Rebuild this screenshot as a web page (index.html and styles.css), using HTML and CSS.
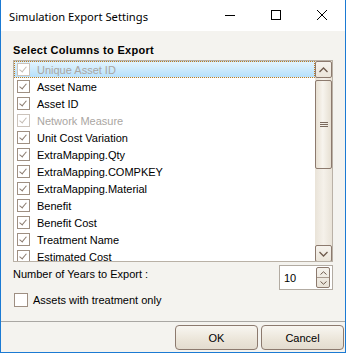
FILE: index.html
```html
<!DOCTYPE html>
<html>
<head>
<meta charset="utf-8">
<link rel="stylesheet" href="styles.css">
</head>
<body>
<div class="window">
  <div class="titlebar">
    <span class="title">Simulation Export Settings</span>
    <div class="controls">
      <span class="ctl"><svg width="46" height="30" viewBox="0 0 46 30"><path d="M18 15.5h10" stroke="#000" stroke-width="1"/></svg></span>
      <span class="ctl"><svg width="46" height="30" viewBox="0 0 46 30"><rect x="18.5" y="10.5" width="9" height="9" fill="none" stroke="#000" stroke-width="1"/></svg></span>
      <span class="ctl"><svg width="46" height="30" viewBox="0 0 46 30"><path d="M18 10l10 10M28 10l-10 10" stroke="#000" stroke-width="1"/></svg></span>
    </div>
  </div>
  <div class="content">
    <div class="section-title">Select Columns to Export</div>
    <div class="listbox">
      <ul class="items">
        <li class="item selected disabled"><span class="cb checked"></span><span>Unique Asset ID</span></li>
        <li class="item"><span class="cb checked"></span><span>Asset Name</span></li>
        <li class="item"><span class="cb checked"></span><span>Asset ID</span></li>
        <li class="item disabled"><span class="cb checked"></span><span>Network Measure</span></li>
        <li class="item"><span class="cb checked"></span><span>Unit Cost Variation</span></li>
        <li class="item"><span class="cb checked"></span><span>ExtraMapping.Qty</span></li>
        <li class="item"><span class="cb checked"></span><span>ExtraMapping.COMPKEY</span></li>
        <li class="item"><span class="cb checked"></span><span>ExtraMapping.Material</span></li>
        <li class="item"><span class="cb checked"></span><span>Benefit</span></li>
        <li class="item"><span class="cb checked"></span><span>Benefit Cost</span></li>
        <li class="item"><span class="cb checked"></span><span>Treatment Name</span></li>
        <li class="item"><span class="cb checked"></span><span>Estimated Cost</span></li>
      </ul>
      <div class="scrollbar">
        <div class="sb-btn"><svg width="9" height="6" viewBox="0 0 9 6"><path d="M0.5 5L4.5 1L8.5 5" fill="none" stroke="#6e5a4c" stroke-width="1.3"/></svg></div>
        <div class="sb-track">
          <div class="sb-thumb"><span class="grip"></span><span class="grip"></span><span class="grip"></span></div>
        </div>
        <div class="sb-btn"><svg width="9" height="6" viewBox="0 0 9 6"><path d="M0.5 1L4.5 5L8.5 1" fill="none" stroke="#6e5a4c" stroke-width="1.3"/></svg></div>
      </div>
    </div>
    <div class="years-row">
      <span class="label">Number of Years to Export :</span>
      <div class="spin">
        <span class="spin-value">10</span>
        <div class="spin-btns">
          <div class="spin-btn"><svg width="7" height="4" viewBox="0 0 7 4"><path d="M0.5 3.5L3.5 0.8L6.5 3.5" fill="none" stroke="#6e5a4c" stroke-width="1"/></svg></div>
          <div class="spin-btn"><svg width="7" height="4" viewBox="0 0 7 4"><path d="M0.5 0.5L3.5 3.2L6.5 0.5" fill="none" stroke="#6e5a4c" stroke-width="1"/></svg></div>
        </div>
      </div>
    </div>
    <div class="check-row">
      <span class="cb plain"></span><span>Assets with treatment only</span>
    </div>
  </div>
  <div class="footer">
    <button class="btn">OK</button>
    <button class="btn">Cancel</button>
  </div>
</div>
</body>
</html>
```
FILE: styles.css
```css
* { box-sizing: border-box; }
html, body { margin: 0; padding: 0; background: #fff; }
.window {
  width: 346px;
  height: 353px;
  border: 1px solid #1b7ad3;
  border-top: none;
  display: flex;
  flex-direction: column;
  background: #f4f3ef;
  font-family: "Liberation Sans", Arial, sans-serif;
  font-size: 11px;
  color: #000;
}
.titlebar {
  height: 31px;
  background: #fff;
  display: flex;
  align-items: center;
  justify-content: space-between;
  flex: none;
}
.title {
  font-family: "Noto Sans", "Open Sans", sans-serif;
  font-size: 11.2px;
  color: #000;
  padding-left: 8px;
  padding-top: 1px;
}
.controls { display: flex; align-self: flex-start; }
.ctl { display: block; width: 46px; height: 30px; }
.ctl svg { display: block; }
.content {
  flex: 1;
  padding: 12px 13px 0 12px;
  display: flex;
  flex-direction: column;
}
.section-title {
  font-weight: bold;
  font-size: 11px;
  letter-spacing: 0.3px;
  line-height: 14px;
  height: 14px;
  margin-bottom: 3px;
}
.listbox {
  width: 320px;
  height: 202px;
  border: 1px solid #b9b1a6;
  background: #fff;
  display: flex;
  overflow: hidden;
}
.items {
  list-style: none;
  margin: 0;
  padding: 0;
  width: 301px;
  overflow: hidden;
}
.item {
  height: 17px;
  display: flex;
  align-items: center;
  padding-left: 2px;
  gap: 7px;
  white-space: nowrap;
  border: 1px solid transparent;
}
.item.selected {
  border: 1px dotted #c47a1a;
  background: linear-gradient(#e2f4fe, #b6e0fb);
}
.item.disabled { color: #aaa6a2; }
.cb {
  width: 13px;
  height: 13px;
  border: 1px solid #9e8f82;
  background: #fff;
  flex: none;
  position: relative;
}
.cb.checked::after {
  content: "";
  position: absolute;
  left: 3px;
  top: 1px;
  width: 3px;
  height: 6px;
  border-right: 1.5px solid #8a7a6e;
  border-bottom: 1.5px solid #8a7a6e;
  transform: rotate(40deg);
}
.item.disabled .cb { border-color: #cbc3bb; background: #fff; }
.item.disabled .cb.checked::after { border-color: #c4bcb4; }
.scrollbar {
  width: 17px;
  display: flex;
  flex-direction: column;
  background: linear-gradient(90deg, #e9e3d8, #f5f1ea 50%, #e9e3d8);
  gap: 1px;
}
.sb-btn {
  height: 17px;
  border: 1px solid #8c7a6e;
  border-radius: 2px;
  background: linear-gradient(#f6f3ed, #ebe5da);
  display: flex;
  align-items: center;
  justify-content: center;
  flex: none;
}
.sb-track { flex: 1; padding: 1px 0 75px; }
.sb-thumb {
  height: 89px;
  border: 1px solid #8c7a6e;
  border-radius: 2px;
  background: linear-gradient(90deg, #e8e0d2, #f7f4ee 45%, #e6dfd2);
  display: flex;
  flex-direction: column;
  align-items: center;
  justify-content: center;
  gap: 1px;
}
.grip { width: 8px; height: 1px; background: #7a6a5e; }
.years-row {
  display: flex;
  justify-content: space-between;
  align-items: flex-start;
  width: 320px;
}
.years-row .label { padding-top: 5px; line-height: 14px; }
.spin {
  margin-top: 3px;
  width: 54px;
  height: 25px;
  border: 1px solid #b2aba2;
  background: #fff;
  display: flex;
  align-items: center;
  justify-content: space-between;
  padding: 0 2px 0 4px;
}
.spin-value { padding-top: 1px; }
.spin-btns {
  width: 14px;
  height: 21px;
  border: 1px solid #8c7a6e;
  border-radius: 2px;
  display: flex;
  flex-direction: column;
  background: linear-gradient(#f5f2ec, #e9e3d8);
}
.spin-btn {
  flex: 1;
  display: flex;
  align-items: center;
  justify-content: center;
}
.spin-btn + .spin-btn { border-top: 1px solid #a89a8e; }
.check-row {
  margin-top: 3px;
  display: flex;
  align-items: center;
  gap: 5px;
  height: 14px;
  padding-left: 1px;
}
.cb.plain { width: 14px; height: 14px; border-color: #9e8f82; }
.footer {
  flex: none;
  border-top: 1px solid #a9a7a3;
  padding: 3px 1px 2px 0;
  display: flex;
  justify-content: flex-end;
  gap: 3px;
}
.btn {
  width: 83px;
  height: 25px;
  border: 1px solid #8c7a6e;
  border-radius: 4px;
  background: linear-gradient(#f8f6f1, #ebe5d9 60%, #e3dccf);
  font-family: "Liberation Sans", Arial, sans-serif;
  font-size: 11px;
  color: #000;
  padding: 0;
}
```
